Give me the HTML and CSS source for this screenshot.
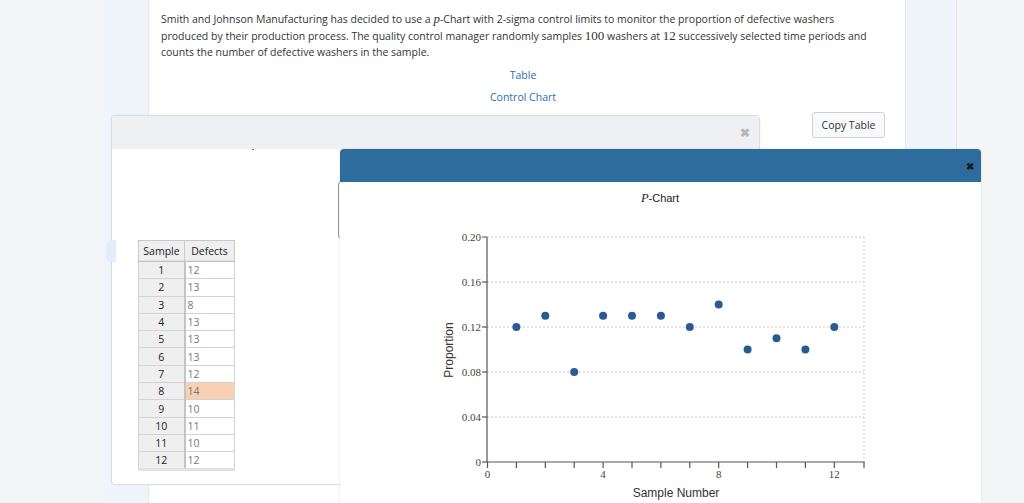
FILE: index.html
```html
<!DOCTYPE html>
<html>
<head>
<meta charset="utf-8">
<link rel="stylesheet" href="styles.css">
</head>
<body>
<div class="page">
  <div class="rail">
    <div class="panel">
      <p class="intro">Smith and Johnson Manufacturing has decided to use a <i class="math">p</i>-Chart with 2-sigma control limits to monitor the proportion of defective washers produced by their production process. The quality control manager randomly samples <span class="num">100</span> washers at <span class="num">12</span> successively selected time periods and counts the number of defective washers in the sample.</p>
      <div class="links">
        <a class="link">Table</a>
        <a class="link">Control Chart</a>
      </div>
      <div class="tools">
        <button class="btn">Copy Table</button>
      </div>
    </div>
  </div>

  <div class="win win-table">
    <div class="win-head"><span class="x-gray">&#x2716;</span></div>
    <div class="win-body">
      <span class="mark m1"></span><span class="mark m2"></span>
      <div class="behind"></div>
      <table class="data">
        <thead><tr><th>Sample</th><th>Defects</th></tr></thead>
        <tbody>
          <tr><td class="s">1</td><td class="d">12</td></tr>
          <tr><td class="s">2</td><td class="d">13</td></tr>
          <tr><td class="s">3</td><td class="d">8</td></tr>
          <tr><td class="s">4</td><td class="d">13</td></tr>
          <tr><td class="s">5</td><td class="d">13</td></tr>
          <tr><td class="s">6</td><td class="d">13</td></tr>
          <tr><td class="s">7</td><td class="d">12</td></tr>
          <tr><td class="s">8</td><td class="d hl">14</td></tr>
          <tr><td class="s">9</td><td class="d">10</td></tr>
          <tr><td class="s">10</td><td class="d">11</td></tr>
          <tr><td class="s">11</td><td class="d">10</td></tr>
          <tr><td class="s">12</td><td class="d">12</td></tr>
        </tbody>
      </table>
    </div>
  </div>
  <div class="tab-handle"></div>

  <div class="win win-chart">
    <div class="chart-head"><span class="x-dark">&#x2716;</span></div>
    <div class="chart-body">
      <svg class="chart" width="640" height="330" viewBox="0 0 640 330">
        <text class="title" x="320" y="20" text-anchor="middle"><tspan class="ital">P</tspan><tspan class="sans">-Chart</tspan></text>
        <g class="grid">
          <line x1="147" y1="55" x2="524" y2="55"/>
          <line x1="147" y1="100" x2="524" y2="100"/>
          <line x1="147" y1="145" x2="524" y2="145"/>
          <line x1="147" y1="190" x2="524" y2="190"/>
          <line x1="147" y1="235" x2="524" y2="235"/>
          <line x1="524" y1="55" x2="524" y2="280"/>
        </g>
        <g class="axis">
          <line x1="147" y1="55" x2="147" y2="280"/>
          <line x1="147" y1="280" x2="524.5" y2="280"/>
          <line x1="142" y1="55" x2="147" y2="55"/>
          <line x1="142" y1="100" x2="147" y2="100"/>
          <line x1="142" y1="145" x2="147" y2="145"/>
          <line x1="142" y1="190" x2="147" y2="190"/>
          <line x1="142" y1="235" x2="147" y2="235"/>
          <line x1="142" y1="280" x2="147" y2="280"/>
          <line x1="147.5" y1="280" x2="147.5" y2="286"/>
          <line x1="176.4" y1="280" x2="176.4" y2="286"/>
          <line x1="205.3" y1="280" x2="205.3" y2="286"/>
          <line x1="234.2" y1="280" x2="234.2" y2="286"/>
          <line x1="263.1" y1="280" x2="263.1" y2="286"/>
          <line x1="292" y1="280" x2="292" y2="286"/>
          <line x1="320.9" y1="280" x2="320.9" y2="286"/>
          <line x1="349.8" y1="280" x2="349.8" y2="286"/>
          <line x1="378.7" y1="280" x2="378.7" y2="286"/>
          <line x1="407.6" y1="280" x2="407.6" y2="286"/>
          <line x1="436.5" y1="280" x2="436.5" y2="286"/>
          <line x1="465.4" y1="280" x2="465.4" y2="286"/>
          <line x1="494.3" y1="280" x2="494.3" y2="286"/>
          <line x1="524" y1="280" x2="524" y2="286"/>
        </g>
        <g class="ticklbl ylbl">
          <text x="141" y="59">0.20</text>
          <text x="141" y="104">0.16</text>
          <text x="141" y="149">0.12</text>
          <text x="141" y="194">0.08</text>
          <text x="141" y="239">0.04</text>
          <text x="141" y="284">0</text>
        </g>
        <g class="ticklbl xlbl">
          <text x="147.5" y="296">0</text>
          <text x="263.1" y="296">4</text>
          <text x="378.7" y="296">8</text>
          <text x="494.3" y="296">12</text>
        </g>
        <text class="axtitle" x="0" y="0" transform="translate(113 168) rotate(-90)" text-anchor="middle">Proportion</text>
        <text class="axtitle" x="336" y="315" text-anchor="middle">Sample Number</text>
        <g class="pts">
          <circle cx="176.4" cy="145" r="4"/>
          <circle cx="205.3" cy="133.8" r="4"/>
          <circle cx="234.2" cy="190" r="4"/>
          <circle cx="263.1" cy="133.8" r="4"/>
          <circle cx="292" cy="133.8" r="4"/>
          <circle cx="320.9" cy="133.8" r="4"/>
          <circle cx="349.8" cy="145" r="4"/>
          <circle cx="378.7" cy="122.5" r="4"/>
          <circle cx="407.6" cy="167.5" r="4"/>
          <circle cx="436.5" cy="156.3" r="4"/>
          <circle cx="465.4" cy="167.5" r="4"/>
          <circle cx="494.3" cy="145" r="4"/>
        </g>
      </svg>
    </div>
  </div>
</div>
</body>
</html>
```

FILE: styles.css
```css
* { box-sizing: border-box; }
html, body { margin: 0; padding: 0; }
body {
  background: #f4f5f7;
  font-family: "Open Sans", "Liberation Sans", sans-serif;
  color: #333;
  width: 1024px;
  height: 503px;
  overflow: hidden;
}
.page { position: relative; width: 1024px; height: 503px; }
.rail {
  margin-left: 99px;
  width: 858px;
  height: 503px;
  background: #f0f5fc;
  border-right: 1px solid #e2e4e8;
  padding: 0 50px 0 49px;
}
.panel {
  background: #fff;
  height: 503px;
  border-left: 1px solid #e4e6ea;
  border-right: 1px solid #e4e6ea;
  padding: 11px 20px 0 12px;
}
.intro {
  margin: 0 10px 0 0;
  font-size: 10.5px;
  line-height: 16.5px;
  color: #333;
}
.math, .num { font-family: "Liberation Serif", serif; font-size: 13px; line-height: 1; }
.links {
  display: flex;
  flex-direction: column;
  align-items: center;
  gap: 5px;
  margin-top: 6px;
}
.link { color: #2a6cb0; font-size: 10.5px; line-height: 17px; }
.tools { display: flex; justify-content: flex-end; margin-top: 6px; }
.btn {
  font-family: "Open Sans", sans-serif;
  font-size: 10.5px;
  color: #333;
  background: #f8f9fb;
  border: 1px solid #cfd3d8;
  border-radius: 3px;
  width: 73px;
  height: 26px;
  padding: 0;
}

.win {
  position: absolute;
  background: #fff;
  border-radius: 4px;
}
.win-table {
  left: 111px; top: 115px; width: 649px; height: 370px;
  border: 1px solid #dcdee2;
  box-shadow: 0 0 2px rgba(0,0,0,0.08);
  overflow: hidden;
}
.win-head {
  height: 33px;
  background: #eff0f4;
  display: flex;
  justify-content: flex-end;
  align-items: center;
  padding-right: 9px;
}
.x-gray { color: #b5b7bb; font-size: 12px; font-weight: bold; }
.win-body { position: relative; padding: 91px 0 0 26px; }
.mark { position: absolute; top: 0; width: 2px; height: 1px; background: #777; }
.m1 { left: 140px; }
.m2 { left: 433px; }
.behind {
  position: absolute;
  left: 226px; top: 33px;
  width: 60px; height: 56px;
  border: 1px solid #999;
  border-radius: 2px;
}
.tab-handle {
  position: absolute;
  left: 106px; top: 240px;
  width: 10px; height: 22px;
  border-radius: 6px 0 0 6px;
  background: #e3ecf8;
}
.data {
  border-collapse: collapse;
  border: 1px solid #8c8c8c;
  font-family: "Open Sans", sans-serif;
  font-size: 10.5px;
}
.data th {
  background: #efefef;
  font-weight: normal;
  color: #222;
  height: 21px;
  padding: 0 3px;
  border: 1px solid #c9c9c9;
  border-bottom: 1px solid #c0c0c0;
  box-shadow: inset 0 -1px 0 #e3e3e3;
}
.data th:first-child { width: 46px; }
.data th:last-child { width: 50px; }
.data td { height: 17.3px; padding: 0 2px; border: 1px solid #d3d3d3; }
.data td.s { background: #efefef; color: #222; text-align: center; border-right: 2px solid #c4c4c4; }
.data td.d { color: #777; background: #fff; }
.data td.hl { background: #f8d0b3; }
.data tbody tr:last-child td { border-bottom: 3px solid #e2e2e2; }

.win-chart {
  left: 340px; top: 149px; width: 641px; height: 360px;
  border-radius: 4px 4px 0 0;
  overflow: hidden;
  box-shadow: 0 0 2px rgba(0,0,0,0.15);
}
.chart-head {
  height: 33px;
  background: #2d6c9d;
  display: flex;
  justify-content: flex-end;
  align-items: center;
  padding-right: 7px;
}
.x-dark { color: #1a1a1a; font-size: 10px; font-weight: bold; }
.chart-body { background: #fff; }
.chart { display: block; }
.title { font-size: 11px; fill: #222; }
.ital { font-family: "Liberation Serif", serif; font-style: italic; font-size: 12.5px; }
.sans { font-family: "Liberation Sans", sans-serif; }
.grid line { stroke: #c8c8c8; stroke-width: 1; stroke-dasharray: 2 2; }
.axis line { stroke: #555; stroke-width: 1.2; }
.ticklbl { font-family: "Liberation Serif", serif; font-size: 11px; fill: #444; }
.ylbl text { text-anchor: end; }
.xlbl text { text-anchor: middle; }
.axtitle { font-family: "Liberation Sans", sans-serif; font-size: 12px; fill: #333; }
.pts circle { fill: #2a5a93; }
```
